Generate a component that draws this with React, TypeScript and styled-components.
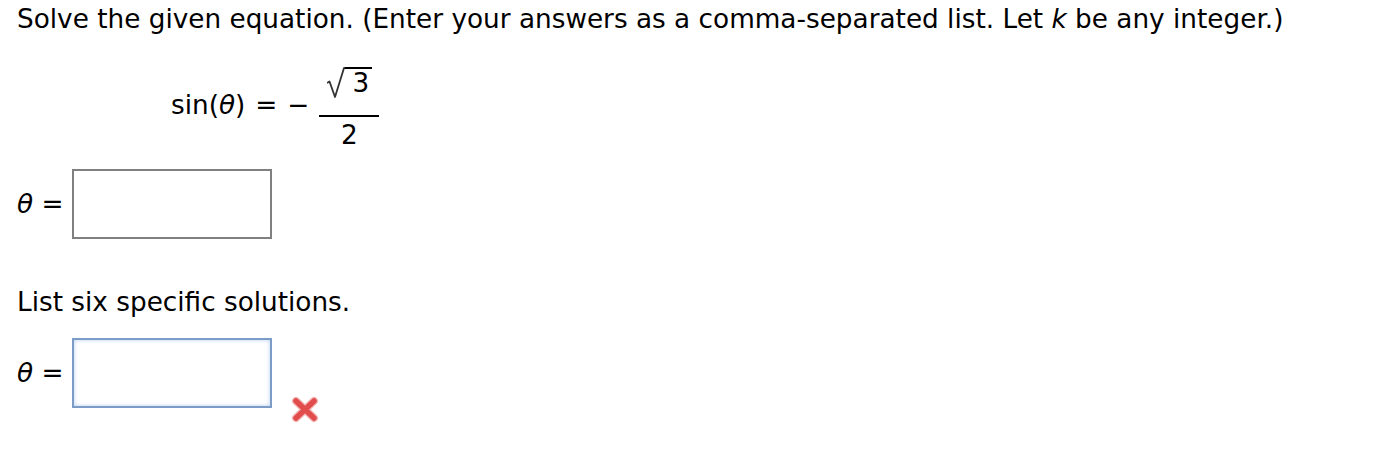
import React from "react";
import styled, { createGlobalStyle } from "styled-components";

const GlobalStyle = createGlobalStyle`
	body {
		margin: 0;
		background: #ffffff;
		font-family: "DejaVu Sans", Verdana, sans-serif;
		color: #000000;
	}
`;

const Page = styled.div`
	padding: 3px 0 40px 17px;
	font-size: 26.3px;
`;

const Prompt = styled.p`
	margin: 0;
	line-height: 32px;
`;

const Equation = styled.div`
	display: flex;
	align-items: center;
	gap: 10px;
	margin: 32px 0 0 154px;
`;

const EqText = styled.span`
	line-height: 32px;
	margin-bottom: 5px;
	white-space: pre;
`;

const Fraction = styled.span`
	display: inline-flex;
	flex-direction: column;
	align-items: center;
	margin-left: 0;
`;

const Numerator = styled.span`
	display: flex;
	align-items: flex-start;
	padding: 0 7px 17px 8px;
	border-bottom: 2px solid #000;
`;

const Radicand = styled.span`
	border-top: 2px solid #000;
	line-height: 26px;
	padding: 1px 3px 0 7px;
`;

const Denominator = styled.span`
	padding-top: 5px;
	line-height: 26px;
`;

const AnswerRow = styled.div<{ $top: number }>`
	display: flex;
	align-items: flex-start;
	margin-top: ${(p) => p.$top}px;
`;

const Label = styled.span`
	width: 55px;
	flex-shrink: 0;
	line-height: 70px;
`;

const AnswerBox = styled.div<{ $active?: boolean }>`
	box-sizing: border-box;
	width: 200px;
	height: 70px;
	border: 2px solid ${(p) => (p.$active ? "#7c9cc7" : "#808080")};
	box-shadow: ${(p) => (p.$active ? "inset 0 0 4px #b5d0f2" : "none")};
	background: #ffffff;
`;

const Section = styled.p`
	margin: 47px 0 0;
	line-height: 32px;
`;

const WrongMark = styled.span`
	display: flex;
	margin: 58px 0 0 19px;
`;

const Italic = styled.i`
	font-style: italic;
`;

const Radical = () => (
	<svg width="18" height="31" viewBox="0 0 18 31">
		<path d="M0 16 L2.5 14.5 L8 30 L17 1 L18 1" fill="none" stroke="#333" strokeWidth="1.8" strokeLinejoin="round" />
	</svg>
);

const Cross = () => (
	<svg width="28" height="27" viewBox="0 0 28 27">
		<g stroke="#f08a8a" strokeWidth="8" strokeLinecap="round" opacity="0.6">
			<path d="M5 5 L23 22 M23 5 L5 22" />
		</g>
		<g stroke="#e14d4d" strokeWidth="5.5" strokeLinecap="round">
			<path d="M5 5 L23 22 M23 5 L5 22" />
		</g>
	</svg>
);

const App = () => {
	return (
		<Page>
			<GlobalStyle />
			<Prompt>
				Solve the given equation. (Enter your answers as a comma-separated list. Let <Italic>k</Italic> be any integer.)
			</Prompt>

			<Equation>
				<EqText>sin(<Italic>θ</Italic>)</EqText>
				<EqText>=</EqText>
				<EqText>−</EqText>
				<Fraction>
					<Numerator>
						<Radical />
						<Radicand>3</Radicand>
					</Numerator>
					<Denominator>2</Denominator>
				</Fraction>
			</Equation>

			<AnswerRow $top={21}>
				<Label><Italic>θ</Italic> =</Label>
				<AnswerBox />
			</AnswerRow>

			<Section>List six specific solutions.</Section>

			<AnswerRow $top={20}>
				<Label><Italic>θ</Italic> =</Label>
				<AnswerBox $active />
				<WrongMark><Cross /></WrongMark>
			</AnswerRow>
		</Page>
	);
};

export default App;
